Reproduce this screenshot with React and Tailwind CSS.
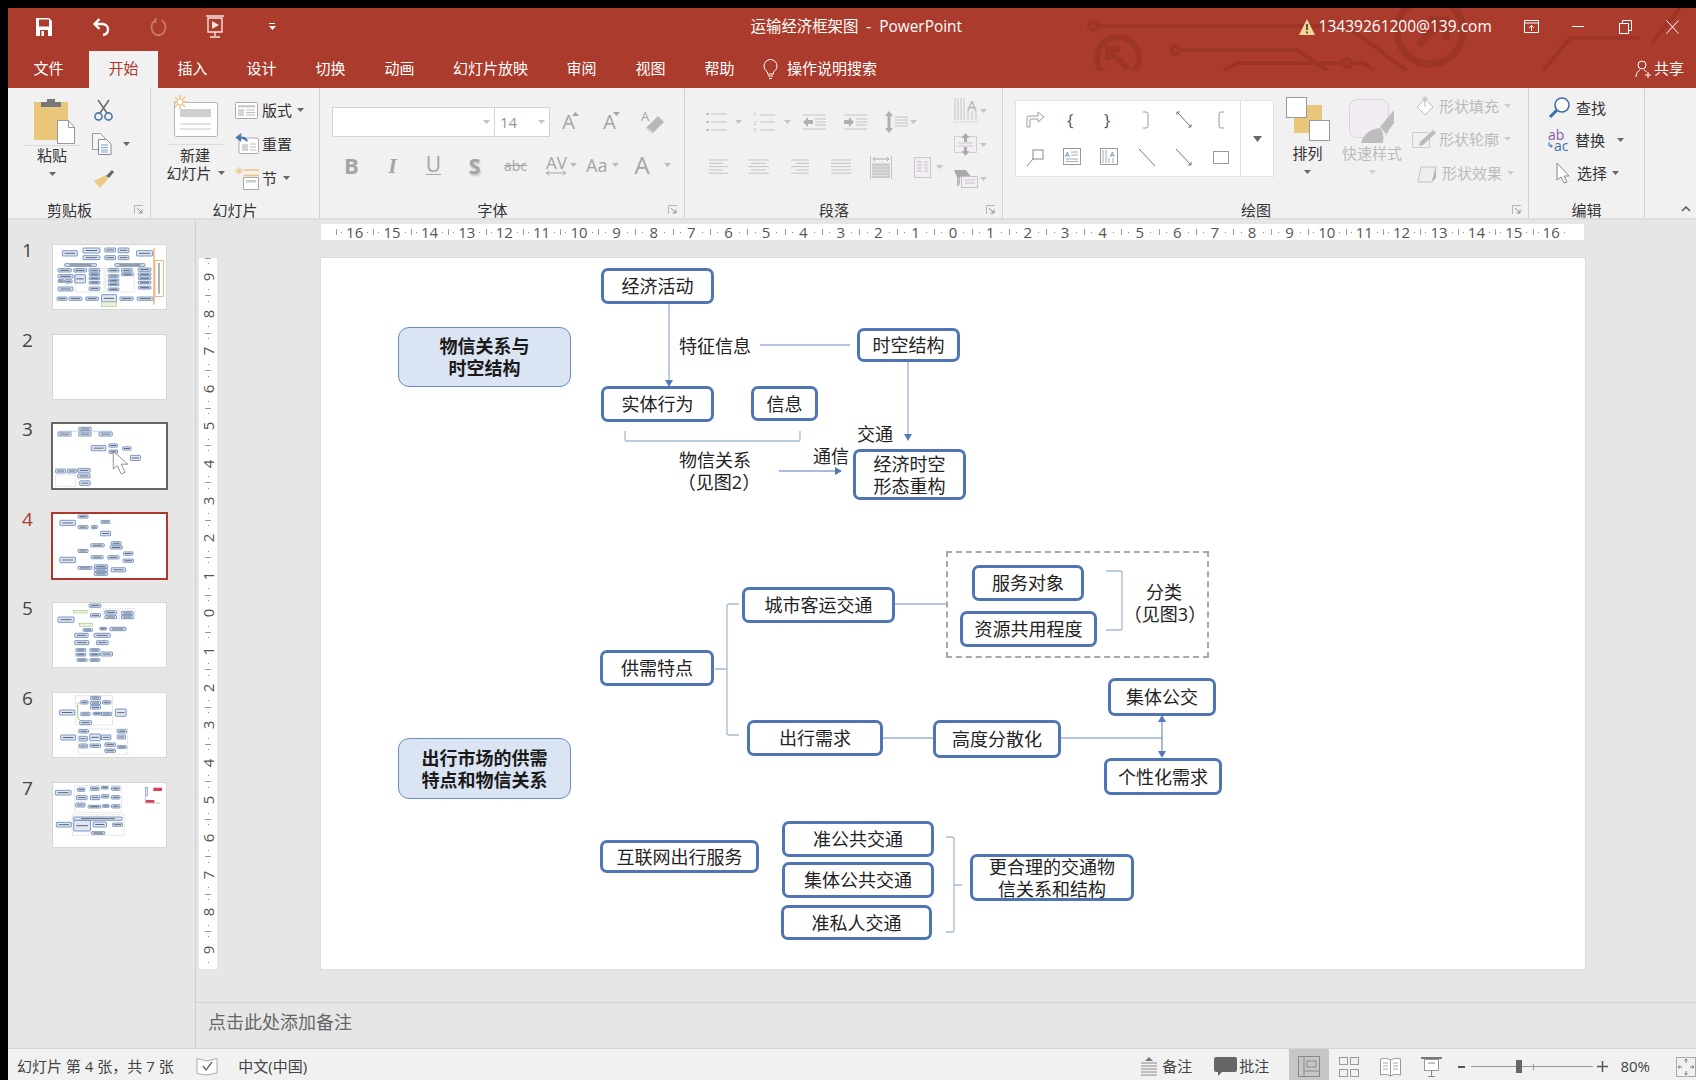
import React from "react";

const FONT = "font-['Open_Sans','Noto_Sans_CJK_SC',sans-serif]";
const LN = "#9fb3d4";
const ARW = "#5579b8";
const D = "#b4b4b4";

const nodes = [
  ["经济活动", 602, 269, 111, 35],
  ["时空结构", 858, 329, 101, 33],
  ["实体行为", 602, 387, 111, 35],
  ["信息", 752, 387, 65, 34],
  ["经济时空\n形态重构", 854, 450, 111, 50],
  ["城市客运交通", 743, 588, 151, 35],
  ["服务对象", 973, 566, 110, 35],
  ["资源共用程度", 961, 612, 135, 35],
  ["供需特点", 601, 651, 112, 35],
  ["出行需求", 748, 721, 134, 35],
  ["高度分散化", 934, 721, 126, 37],
  ["集体公交", 1109, 679, 106, 37],
  ["个性化需求", 1105, 759, 116, 36],
  ["互联网出行服务", 601, 841, 157, 32],
  ["准公共交通", 783, 822, 150, 35],
  ["集体公共交通", 783, 863, 150, 35],
  ["准私人交通", 782, 906, 149, 34],
  ["更合理的交通物\n信关系和结构", 971, 855, 162, 46],
];
const heads = [
  ["物信关系与\n时空结构", 398, 328, 173, 59],
  ["出行市场的供需\n特点和物信关系", 398, 739, 173, 60],
];
const notes = [
  ["特征信息", 715, 347],
  ["物信关系", 715, 461],
  ["（见图2）", 719, 483],
  ["通信", 831, 457],
  ["交通", 875, 435],
  ["分类", 1164, 593],
  ["（见图3）", 1165, 615],
];

function Connectors() {
  const p = (d, c = LN, w = 1.3) => <path d={d} fill="none" stroke={c} strokeWidth={w} />;
  const tri = (d) => <path d={d} fill={ARW} />;
  return (
    <svg className="absolute inset-0" width="1264" height="711" viewBox="321 259 1264 711">
      {p("M669 304V382", "#8398bd", 1)}
      {tri("M665 381h8l-4 7z")}
      {p("M760 346H850")}
      {p("M908 362V436")}
      {tri("M904 435h8l-4 7z")}
      {p("M625 432v8a2 2 0 0 0 2 2H798a2 2 0 0 0 2-2v-8", "#a9b9d3")}
      {p("M779 472H836", ARW, 1)}
      {tri("M835 468l7 4-7 4z")}
      {p("M894 605H946")}
      {p("M1106 572h14a2 2 0 0 1 2 2v55a2 2 0 0 1-2 2h-14", "#a9b9d3")}
      {p("M739 605h-10a2 2 0 0 0-2 2V734a2 2 0 0 0 2 2h10M715 670h12", "#a9b9d3")}
      {p("M882 739H934M1060 739H1162")}
      {p("M1162 722V754", ARW, 1)}
      {tri("M1162 716l-4 7h8z")}
      {tri("M1162 759l-4-7h8z")}
      {p("M946 838h6a2 2 0 0 1 2 2V931a2 2 0 0 1-2 2h-6M954 886h8", "#a9b9d3")}
    </svg>
  );
}

function Diagram() {
  return (
    <div className="relative w-[1264px] h-[711px] bg-white text-[18px] leading-[22px] text-[#222] shrink-0 shadow-[0_0_0_1px_#dcdcdc]">
      <Connectors />
      <div className="absolute left-[625px] top-[293px] w-[263px] h-[107px] border-2 border-dashed border-[#a8a8a8]" />
      {heads.map(([t, x, y, w, h]) => (
        <div key={t} style={{ left: x - 321, top: y - 259, width: w, height: h + 1 }}
          className="absolute flex items-center justify-center text-center whitespace-pre-line font-bold rounded-[11px] bg-[#dae4f3] border-[1.5px] border-[#6a8cc6] text-[#1a1a1a]">
          {t}
        </div>
      ))}
      {nodes.map(([t, x, y, w, h]) => (
        <div key={t} style={{ left: x - 322, top: y - 259, width: w + 2, height: h + 1 }}
          className="absolute flex items-center justify-center text-center whitespace-pre-line bg-white rounded-[7px] border-[3px] border-[#4f75b5]">
          {t}
        </div>
      ))}
      {notes.map(([t, x, y]) => (
        <div key={t} style={{ left: x - 321 - 60, top: y - 259 - 11, width: 120 }}
          className="absolute text-center whitespace-nowrap">
          {t}
        </div>
      ))}
    </div>
  );
}

/* ---------- thumbnails ---------- */
const Mini = ({ b, vb, children }) => (
  <svg className="block" width="100%" height="100%" viewBox={vb} preserveAspectRatio="none">
    {b.map(([x, y, w, h], i) => (
      <g key={i}>
        <rect x={x} y={y} width={w} height={h} rx="2" fill="#dfe7f4" stroke="#4f75b5" strokeWidth="2.2" />
        <line x1={x + w * 0.15} x2={x + w * 0.85} y1={y + h / 2} y2={y + h / 2} stroke="#444" strokeWidth="2.4" />
      </g>
    ))}
    {children}
  </svg>
);
const t1 = [[188,93,45,16],[250,85,50,15],[315,85,32,12],[355,85,32,14],[410,93,48,16],[250,108,50,12],[315,108,32,12],[355,108,32,12],[195,132,95,8],[345,132,90,8],[175,147,40,10],[222,147,38,10],[268,147,32,10],[325,147,32,10],[365,147,32,10],[415,145,38,10],[175,165,45,10],[195,180,22,10],[225,165,32,25],[268,160,32,8],[268,172,32,8],[268,185,32,8],[325,165,32,8],[325,178,32,8],[325,190,32,8],[365,160,35,8],[415,160,38,8],[415,172,38,8],[415,185,38,8],[415,200,38,8],[175,180,18,8],[175,202,45,12],[268,202,32,10],[325,205,32,8],[172,232,30,10],[208,232,38,10],[258,232,38,10],[305,225,45,22],[360,232,40,10],[412,232,48,10]];
const t3 = [[235,622,38,10],[172,637,40,12],[235,637,38,12],[297,637,40,12],[273,678,44,16],[327,673,26,10],[327,692,26,10],[368,682,26,10],[392,708,30,16],[165,750,30,12],[200,750,28,12],[232,748,38,12],[232,765,38,12],[238,786,32,14]];
const t5 = [[268,1158,35,10],[175,1197,48,16],[272,1187,30,10],[315,1178,35,10],[315,1192,35,10],[365,1180,35,10],[365,1192,35,10],[250,1232,28,8],[300,1228,20,8],[330,1228,48,10],[225,1246,40,12],[283,1246,48,12],[225,1268,42,12],[290,1268,35,12],[228,1292,30,8],[270,1292,30,8],[303,1302,35,12],[228,1306,30,8],[270,1306,30,8],[232,1322,30,8],[270,1322,30,8]];
const t6 = [[180,153,45,15],[243,125,22,10],[272,112,30,10],[272,127,30,10],[272,140,30,10],[308,125,25,10],[347,150,32,22],[243,160,28,10],[280,160,25,8],[305,160,30,10],[240,185,35,12],[183,228,45,15],[238,212,28,10],[238,232,25,14],[270,225,32,20],[305,228,28,14],[352,212,28,10],[352,228,25,12],[238,255,25,12],[270,255,32,10],[315,252,32,10],[315,270,32,10],[352,260,28,8]];
const t7 = [[167,392,47,14],[233,385,22,10],[272,382,26,10],[305,380,20,8],[335,382,25,10],[230,408,32,12],[272,408,28,12],[305,405,22,10],[335,408,25,10],[228,430,28,12],[265,437,38,8],[308,435,20,8],[335,435,25,10],[222,472,145,10],[170,488,45,14],[222,482,50,32],[280,487,40,15],[338,490,30,10],[275,516,40,8]];
const dash = (x, y, w, h) => <rect x={x} y={y} width={w} height={h} fill="none" stroke="#999" strokeWidth="1.2" strokeDasharray="4 3" />;

const thumbs = [
  <Mini b={t1} vb="160 76 338 192">
    {dash(228, 145, 85, 72)}{dash(318, 145, 85, 72)}
    <rect x="465" y="122" width="25" height="108" fill="#fff" stroke="#e8904a" strokeWidth="2" />
    <line x1="462" x2="462" y1="85" y2="255" stroke="#e8904a" strokeWidth="3" />
    <line x1="477" x2="477" y1="130" y2="222" stroke="#666" strokeWidth="3" />
    <rect x="305" y="247" width="45" height="14" fill="#e8f2dd" stroke="#8cc063" strokeWidth="1.5" />
  </Mini>,
  null,
  <Mini b={t3} vb="157 612 343 196">
    {dash(165, 768, 60, 35)}
    <line x1="172" x2="337" y1="634" y2="634" stroke="#4f75b5" />
    <path d="M340 695v55l12-10 12 25 12-5-12-25h20z" fill="#fff" stroke="#333" strokeWidth="1.6" />
  </Mini>,
  <Mini b={[...nodes, ...heads].map(([, x, y, w, h]) => [(x - 321) * 0.2674 + 157, (y - 258) * 0.2756 + 880, w * 0.2674, h * 0.2756])} vb="157 880 338 196" />,
  <Mini b={t5} vb="160 1155 338 192">
    <rect x="222" y="1177" width="40" height="8" fill="#eaf3e2" stroke="#8cc063" strokeWidth="1.5" />
    <rect x="240" y="1216" width="38" height="9" fill="#eaf3e2" stroke="#8cc063" strokeWidth="1.5" />
    {dash(310, 1172, 45, 30)}{dash(360, 1172, 45, 30)}
  </Mini>,
  <Mini b={t6} vb="160 102 338 192">
    {dash(228, 110, 110, 88)}{dash(235, 210, 148, 75)}
    <path d="M240 130q-6 0-6 8v36q0 8 6 8" fill="none" stroke="#8cc063" strokeWidth="2.5" />
  </Mini>,
  <Mini b={t7} vb="160 370 338 192">
    {dash(225, 378, 140, 80)}{dash(218, 465, 155, 62)}
    <rect x="460" y="384" width="26" height="10" fill="#d8405a" />
    <rect x="438" y="421" width="25" height="8" fill="#d8405a" />
    <rect x="436" y="383" width="7" height="26" fill="#e4ebf6" stroke="#4f75b5" strokeWidth="1.5" />
    <path d="M436 412v18h44" fill="none" stroke="#444" strokeWidth="1" />
  </Mini>,
];

function Sidebar() {
  return (
    <div className="w-[188px] shrink-0 border-r border-[#cfcfcf] pt-[25px] flex flex-col gap-[25.6px]">
      {thumbs.map((t, i) => (
        <div key={i} className="flex h-[64px] items-start">
          <div className={`w-[45px] pl-[14px] -mt-[5px] text-[19px] leading-[20px] ${i === 3 ? "text-[#ab3a2c]" : "text-[#444]"}`}>{i + 1}</div>
          <div className={`w-[113px] h-[64px] bg-white overflow-hidden ${i === 2 ? "outline-2 outline-[#666]" : i === 3 ? "outline-2 outline-[#ab3a2c]" : "outline-1 outline-[#d6d6d6]"}`}>{t}</div>
        </div>
      ))}
    </div>
  );
}

/* ---------- rulers ---------- */
const cmLabels = [...Array(17).keys()].map((n) => 16 - n).concat([...Array(16).keys()].map((n) => n + 1));
const vLabels = [...Array(10).keys()].map((n) => 9 - n).concat([...Array(9).keys()].map((n) => n + 1));

function HRuler() {
  return (
    <div className="ml-[125px] w-[1263px] h-[16px] bg-white flex pl-[15px] shrink-0 text-[15px] leading-[16px] text-[#555]">
      {cmLabels.map((n, i) => (
        <div key={i} className="w-[37.4px] shrink-0 h-full flex items-center justify-between">
          <i className="w-px h-[6px] bg-[#999]" />
          <i className="w-px h-px bg-[#888]" />
          <span>{n}</span>
          <i className="w-px h-px bg-[#888]" />
          <i className="w-px h-px" />
        </div>
      ))}
    </div>
  );
}
function VRuler() {
  return (
    <div className="ml-[3px] w-[18px] h-[711px] bg-white shrink-0 flex flex-col text-[15px] leading-[16px] text-[#555]">
      {vLabels.map((n, i) => (
        <div key={i} className="h-[37.4px] shrink-0 w-full flex flex-col items-center justify-between">
          <i className="h-px w-[6px] bg-[#999]" />
          <i className="h-px w-px bg-[#888]" />
          <span className="h-[16px] w-[16px] flex items-center justify-center -rotate-90">{n}</span>
          <i className="h-px w-px bg-[#888]" />
          <i className="h-px w-px" />
        </div>
      ))}
    </div>
  );
}

/* ---------- icons ---------- */
const I = ({ w, h, vb, children, cls = "" }) => (
  <svg width={w} height={h} viewBox={vb || `0 0 ${w} ${h}`} className={`block shrink-0 overflow-visible ${cls}`} fill="none">{children}</svg>
);
const Caret = ({ c = "#666", cls = "" }) => (
  <I w={7} h={4} cls={cls}><path d="M0 0h7L3.5 4z" fill={c} /></I>
);
const hl = (x1, x2, ys, c = D, sw = 1) => ys.map((y) => <line key={y + "" + x1} x1={x1} x2={x2} y1={y} y2={y} stroke={c} strokeWidth={sw} />);

const Launcher = () => (
  <I w={10} h={10}>
    <path d="M.5 9V.5H9" stroke="#b5b5b5" />
    <path d="M3 3l5 5M8 4.5V8H4.5" stroke="#8f8f8f" />
  </I>
);

function Circuit() {
  const c = "#9d3527";
  return (
    <svg className="absolute left-[1072px] top-0" width="616" height="63" viewBox="1080 8 616 63" fill="none" stroke={c} strokeWidth="4">
      <circle cx="1093" cy="26" r="4" />
      <path d="M1097 26H1347L1407 71" />
      <circle cx="1175" cy="50" r="4" />
      <path d="M1179 50H1297L1328 71" />
      <path d="M1223 71L1237 63H1343M1351 63H1363L1375 71" />
      <circle cx="1347" cy="63" r="4" />
      <circle cx="1118" cy="58" r="21" strokeWidth="6" />
      <path d="M1109 50L1128 69M1108 60V49H1120" strokeWidth="6" />
      <circle cx="1430" cy="31" r="33" strokeWidth="7" />
      <path d="M1418 45L1445 20M1428 20H1446V40" strokeWidth="7" />
      <path d="M1543 71L1570 38H1640M1652 43L1680 8" />
    </svg>
  );
}

function TitleRow() {
  return (
    <div className="relative h-[43px] flex items-center pb-[6px] pl-[8px] text-white text-[15.4px] shrink-0">
      <div className="w-[58px] flex justify-center">
        <I w={16} h={18}><path d="M0 0h13l3 3v15H0z" fill="#fff" /><rect x="3" y="1.5" width="10" height="7" fill="#ab3b2c" /><rect x="4" y="12" width="8" height="6" fill="#ab3b2c" /><rect x="5.500" y="13" width="2.500" height="5" fill="#fff" /></I>
      </div>
      <div className="w-[58px] flex justify-center">
        <I w={17} h={18}><path d="M6.5 1L1.5 6l5 5M2 6h8a5.5 5.5 0 0 1 5 5.5c0 2.5-1.5 5-5 5.5" stroke="#fff" strokeWidth="2.4" /></I>
      </div>
      <div className="w-[58px] flex justify-center">
        <I w={17} h={20}><path d="M11.5 3a7 8 0 1 1-6 0M5.5 1v5" stroke="#c8796c" strokeWidth="1.8" /></I>
      </div>
      <div className="w-[58px] flex justify-center">
        <I w={20} h={24}>
          <path d="M1 1h18M3 3h14v14H3zM10 17v4M5 22h10" stroke="#f3e3df" strokeWidth="1.4" />
          <path d="M7 6l7 4-7 4z" fill="#f3e3df" />
        </I>
      </div>
      <div className="w-[58px] flex flex-col items-center gap-[2px]">
        <i className="w-[6px] h-px bg-white" />
        <Caret c="#fff" />
      </div>
      <div className="ml-[450px] w-[209px] whitespace-nowrap shrink-0">运输经济框架图&nbsp; -&nbsp; PowerPoint</div>
      <div className="ml-[339px] flex items-center gap-[4px]">
        <I w={16} h={16}>
          <path d="M8 0L16 16H0z" fill="#f3d794" />
          <path d="M8 5v6M8 12.5v2" stroke="#333" strokeWidth="1.6" />
        </I>
        <span className="w-[171px] text-[15.5px] whitespace-nowrap">13439261200@139.com</span>
      </div>
      <div className="ml-[18px] w-[48px] flex justify-center">
        <I w={15} h={13}><path d="M.5.5h14v12H.5zM.5 3h14M7.5 11V6M5 8l2.5-2.5L10 8" stroke="#fff" /></I>
      </div>
      <div className="w-[48px] flex justify-center"><i className="w-[12px] h-[1.5px] bg-white" /></div>
      <div className="w-[48px] flex justify-center">
        <I w={13} h={14}><path d="M.5 3.5h9v10h-9zM3.5 3.5V.5h9v10h-3" stroke="#fff" /></I>
      </div>
      <div className="w-[48px] flex justify-center">
        <I w={13} h={14}><path d="M.5.5l12 13M12.5.5L.5 13.5" stroke="#fff" /></I>
      </div>
    </div>
  );
}

const tabs = [["文件", 75], ["开始", 69, 1], ["插入", 69], ["设计", 69], ["切换", 69], ["动画", 69], ["幻灯片放映", 113], ["审阅", 69], ["视图", 69], ["帮助", 69]];
function TabRow() {
  return (
    <div className="relative h-[37px] flex pl-[6px] text-[15px] text-white shrink-0">
      {tabs.map(([t, w, on]) => (
        <div key={t} style={{ width: w }}
          className={`flex items-center justify-center shrink-0 pb-[2px] ${w === 75 ? "pr-[6px]" : ""} ${on ? "bg-[#f1f1f1] text-[#ab3a2c]" : ""}`}>{t}</div>
      ))}
      <div className="flex items-center ml-[9px] gap-[9px] pb-[2px]">
        <I w={15} h={20}>
          <path d="M4.5 13C2.5 11.5 1 9.5 1 7a6.5 6.5 0 0 1 13 0c0 2.500-1.500 4.500-3.500 6v2h-6zM5 17h5M6 19.500h3" stroke="#fff" />
        </I>
        <span>操作说明搜索</span>
      </div>
      <div className="ml-auto flex items-center pr-[12px] gap-[2px] pb-[2px]">
        <I w={17} h={18}>
          <circle cx="7" cy="5" r="4" stroke="#fff" />
          <path d="M1 17c0-4 2-6 4-7M9 10c1 .5 2 1 2.500 2M13 12v6M10 15h6" stroke="#fff" />
        </I>
        <span>共享</span>
      </div>
    </div>
  );
}

function Group({ w, label, launcher = true, children }) {
  return (
    <div style={{ width: w }} className="h-full shrink-0 flex flex-col border-r border-[#d2d2d2]">
      <div className="h-[112px] flex shrink-0">{children}</div>
      <div className="h-[18px] flex items-center pt-[2px]">
        <span className="flex-1 text-center text-[15px] leading-[18px] text-[#333]">{label}</span>
        {launcher && <div className="w-[19px] flex justify-center pr-[4px]"><Launcher /></div>}
      </div>
    </div>
  );
}

function Clipboard() {
  return (
    <Group w={143} label="剪贴板">
      <div className="ml-[16px] w-[56px] pt-[10px] flex flex-col items-center">
        <I w={41} h={46} cls="ml-[5px]">
          <rect y="4" width="34" height="38" fill="#eac67a" />
          <path d="M7 9V4h6V1h8v3h6v5z" fill="#777" />
          <path d="M23.500 22.500h11l6 7v16h-17z" fill="#fff" stroke="#999" />
          <path d="M34.500 22.500v7h6" stroke="#999" />
        </I>
        <i className="w-full h-px bg-[#dcdcdc] mt-px" />
        <span className="-mt-[2px] text-[15px] leading-[22px] text-[#333]">粘贴</span>
        <Caret cls="mt-[6px]" />
      </div>
      <div className="ml-[12px] pt-[12px] flex flex-col">
        <I w={20} h={21} cls="ml-[2px]">
          <path d="M4 0l9 13M15 0L6 13" stroke="#666" strokeWidth="1.4" />
          <circle cx="4.500" cy="16.500" r="3.600" stroke="#4a78b0" strokeWidth="1.600" />
          <circle cx="14.500" cy="16.500" r="3.600" stroke="#4a78b0" strokeWidth="1.600" />
        </I>
        <div className="mt-[12px] flex items-center">
          <I w={20} h={22}>
            <path d="M.5.5h8l4 4v12H.5z" fill="#f6f6f6" stroke="#999" />
            <path d="M6.500 6.500h8l4.500 4.500v10.500H6.500z" fill="#f8fbff" stroke="#8a8a8a" />
            {hl(9, 16, [12, 14.500, 17, 19], "#7fa4cc")}
          </I>
          <Caret cls="ml-[11px]" />
        </div>
        <I w={20} h={18} cls="ml-[2px] mt-[15px]">
          <path d="M12 5L0 11l6 7 8-9z" fill="#ebc97f" />
          <path d="M12 6l6-6 2 2-5 6z" fill="#666" />
        </I>
      </div>
    </Group>
  );
}

function Slides() {
  const rowCls = "flex items-center text-[15px] text-[#333]";
  return (
    <Group w={169} label="幻灯片" launcher={false}>
      <div className="ml-[16px] w-[58px] pt-[7px] flex flex-col items-center">
        <I w={46} h={42} cls="-ml-[3px]">
          <rect x="2.500" y="7.500" width="43" height="34" rx="2" fill="#fff" stroke="#b5b5b5" />
          <rect x="8" y="14" width="31" height="8" fill="#cfcfcf" />
          {hl(8, 39, [29, 34], "#c8c8c8")}
          <g stroke="#efc27a" strokeWidth="1.400">
            <path d="M8 0v14M1 7h14M3 2l10 10M13 2L3 12" />
          </g>
          <circle cx="8" cy="7" r="3" fill="#fff" stroke="#efc27a" />
        </I>
        <i className="w-full h-px bg-[#dcdcdc] mt-[7px]" />
        <span className="text-[15px] leading-[20px] text-[#333] -ml-[2px]">新建</span>
        <span className="text-[15px] leading-[18px] -mt-[1px] text-[#333] whitespace-nowrap flex items-center gap-[6px] -ml-[1px]">幻灯片<Caret /></span>
      </div>
      <div className="ml-[10px] pt-[12px] flex flex-col">
        <div className={rowCls + " h-[20px]"}>
          <I w={23} h={17} cls="mr-[4px]">
            <rect x=".5" y=".5" width="22" height="16" rx="1" fill="#fff" stroke="#aaa" />
            <rect x="3" y="3" width="17" height="2.500" fill="#ccc" />
            <rect x="3" y="7" width="6" height="7" fill="#d5d5d5" />
            {hl(11, 20, [8, 10.500, 13], "#bbb")}
          </I>
          版式<Caret cls="ml-[5px]" />
        </div>
        <div className={rowCls + " h-[22px] mt-[13px]"}>
          <I w={24} h={20} cls="mr-[3px]">
            <rect x="4" y="4" width="19.500" height="15.500" rx="1" fill="#fff" stroke="#aaa" />
            <rect x="7" y="10" width="6" height="7" fill="#d5d5d5" />
            {hl(15, 21, [10, 13, 16], "#bbb")}
            <path d="M1.500 3.500l4-3v6zM5 3.500h3a4 4 0 0 1 4 4" fill="#4a78b0" stroke="#4a78b0" strokeWidth="1.500" />
          </I>
          重置
        </div>
        <div className={rowCls + " h-[24px] mt-[11px]"}>
          <I w={24} h={24} cls="mr-[3px]">
            {hl(9, 24, [4, 9.500], "#efc27a", 1.500)}
            <path d="M4 1v8M0 5h8M1.500 2.500l5 5M6.500 2.500l-5 5" stroke="#efc27a" />
            <rect x="8.500" y="11.500" width="15" height="12" fill="#fff" stroke="#aaa" />
            <rect x="11" y="14" width="10" height="2.500" fill="#ccc" />
          </I>
          节<Caret cls="ml-[6px]" />
        </div>
      </div>
    </Group>
  );
}

const fCell = "w-[41px] h-[30px] flex items-center justify-center shrink-0 text-[#a5a5a5]";
function FontGroup() {
  return (
    <Group w={365} label="字体">
      <div className="pt-[19px] pl-[12px] flex flex-col font-['Open_Sans',sans-serif]">
        <div className="flex h-[30px]">
          <div className="w-[218px] flex border border-[#d4d4d4] bg-white">
            <div className="w-[162px] border-r border-[#d4d4d4] flex items-center justify-end pr-[4px]"><Caret c="#c4c4c4" /></div>
            <div className="flex-1 flex items-center justify-between pl-[5px] pr-[4px] text-[15px] text-[#a39089]">14<Caret c="#c4c4c4" /></div>
          </div>
          <div className={fCell + " text-[20px]"}>
            A<I w={7} h={4} cls="mb-[16px] -ml-[3px]"><path d="M0 4L3.500 0 7 4z" fill="#a5a5a5" /></I>
          </div>
          <div className={fCell + " text-[20px]"}>
            A<I w={7} h={4} cls="mb-[16px] -ml-[3px]"><path d="M0 0L3.500 4 7 0z" fill="#a5a5a5" /></I>
          </div>
          <div className="w-[41px] flex items-center justify-center">
            <I w={24} h={24}>
              <text x="0" y="11" fontSize="13" fill="#a5a5a5" fontFamily="Open Sans">A</text>
              <path d="M5 18L17 6l6 6-11 11z" fill="#b8b8b8" />
              <path d="M5 18l7 5" stroke="#d8d8d8" strokeWidth="2" />
            </I>
          </div>
        </div>
        <div className="flex h-[30px] mt-[13px] items-center -ml-[1px]">
          <div className={fCell + " text-[22px] font-bold"}>B</div>
          <div className={fCell + " text-[22px] italic font-['Liberation_Serif',serif] font-bold"}>I</div>
          <div className={fCell + " text-[21px]"}><span className="underline underline-offset-2 decoration-1">U</span></div>
          <div className={fCell + " text-[22px] font-bold [text-shadow:1px_2px_2px_#c5c5c5]"}>S</div>
          <div className={fCell + " text-[14px] line-through"}>abc</div>
          <div className="w-[41px] h-[30px] flex items-center shrink-0 text-[#a5a5a5] text-[17px] gap-[3px] leading-[15px] pl-[10px]">
            <span className="flex flex-col items-center">AV
              <I w={20} h={6}><path d="M0 3h20M3 .5L.5 3 3 5.500M17 .5L19.500 3 17 5.500" stroke="#a5a5a5" /></I>
            </span>
            <Caret c="#bbb" />
          </div>
          <div className="w-[41px] ml-[2px] h-[30px] flex items-center shrink-0 text-[#a5a5a5] text-[18px] gap-[5px] pl-[7px]">Aa<Caret c="#bbb" /></div>
          <div className={fCell + " text-[24px] w-[44px]"}>A</div>
          <Caret c="#bbb" />
        </div>
      </div>
    </Group>
  );
}

const Al = ({ w, t = [] }) => (
  <I w={w} h={16}>
    {t.map(([a, b], i) => <line key={i} x1={a} x2={b} y1={1 + i * 3.300} y2={1 + i * 3.300} stroke="#c4c4c4" />)}
  </I>
);
function Para() {
  return (
    <Group w={318} label="段落">
      <div className="w-[260px] pt-[19px] flex flex-col">
        <div className="h-[30px] flex items-center">
          <I w={21} h={20} cls="ml-[21px]">
            {[2, 10, 18].map((y) => <circle key={y} cx="1.500" cy={y} r="1.300" fill="#b8b8b8" />)}
            {hl(5, 21, [2, 10, 18], "#c4c4c4")}
          </I>
          <Caret c="#c4c4c4" cls="ml-[8px]" />
          <I w={22} h={20} cls="ml-[11px]">
            <text x="0" y="5" fontSize="6" fill="#bbb">1</text>
            <text x="0" y="13" fontSize="6" fill="#bbb">2</text>
            <text x="0" y="20" fontSize="6" fill="#bbb">3</text>
            {hl(7, 22, [3, 10, 18], "#c4c4c4")}
          </I>
          <Caret c="#c4c4c4" cls="ml-[9px]" />
          <I w={23} h={16} cls="ml-[12px]">
            {hl(0, 23, [1, 15], "#c4c4c4")}
            {hl(12, 23, [5, 8, 11], "#c4c4c4")}
            <path d="M0 8l5-5v3h5v4H5v3z" fill="#b0b0b0" />
          </I>
          <I w={23} h={16} cls="ml-[18px]">
            {hl(0, 23, [1, 15], "#c4c4c4")}
            {hl(12, 23, [5, 8, 11], "#c4c4c4")}
            <path d="M10 8L5 3v3H0v4h5v3z" fill="#b0b0b0" />
          </I>
          <I w={23} h={22} cls="ml-[18px]">
            <path d="M4 0l4 5H5.500v12H8l-4 5-4-5h2.500V5H0z" fill="#b0b0b0" />
            {hl(10, 23, [6, 9, 12, 15], "#c4c4c4")}
          </I>
          <Caret c="#c4c4c4" cls="ml-[2px]" />
        </div>
        <div className="h-[30px] mt-[15px] pl-[24px] flex items-center">
          <Al w={19} t={[[0, 19], [0, 14], [0, 19], [0, 14], [0, 19]]} />
          <div className="ml-[20px]"><Al w={21} t={[[0, 21], [3, 18], [0, 21], [3, 18], [0, 21]]} /></div>
          <div className="ml-[22px]"><Al w={18} t={[[0, 18], [5, 18], [0, 18], [5, 18], [0, 18]]} /></div>
          <div className="ml-[22px]"><Al w={20} t={[[0, 20], [0, 20], [0, 20], [0, 20], [0, 20]]} /></div>
          <I w={22} h={23} cls="ml-[19px]">
            <path d="M.5 0v23M21.500 0v23" stroke="#c4c4c4" />
            <path d="M3 3h16M5 1L3 3l2 2M17 1l2 2-2 2" stroke="#aaa" />
            <rect x="2" y="7" width="18" height="15" fill="#dcdcdc" />
            {hl(2, 20, [9, 12, 15, 18, 21], "#bdbdbd")}
          </I>
          <I w={17} h={21} cls="ml-[22px]">
            <rect x=".5" y=".5" width="16" height="20" fill="#f3eef3" stroke="#c9c9c9" />
            {hl(3, 8, [5, 8, 11, 14], "#c0c0c0")}
            {hl(10, 14, [5, 8, 11, 14], "#c0c0c0")}
          </I>
          <Caret c="#c4c4c4" cls="ml-[5px]" />
        </div>
      </div>
      <div className="ml-[9px] pt-[10px] flex flex-col">
        <div className="flex items-center gap-[2px]">
          <I w={24} h={25}>
            <path d="M1 0v22M4 0v22M7 0v22M10 0v22M14 13v9M18 13v9M22 13v9" stroke="#c4c4c4" />
            <path d="M0 24h24" stroke="#bbb" strokeDasharray="1 1" />
            <text x="13" y="13" fontSize="15" fill="#b0b0b0" fontFamily="Open Sans">A</text>
          </I>
          <Caret c="#c4c4c4" />
        </div>
        <div className="mt-[10px] flex items-center gap-[3px]">
          <I w={23} h={23}>
            <rect x=".5" y="3.500" width="22" height="16" fill="#f3eef3" stroke="#d0d0d0" />
            {hl(4, 19, [10, 13], "#c9c9c9")}
            <path d="M11.500 0l4 5H13v4h-3V5H7.500zM11.500 23l4-5H13v-4h-3v4H7.500z" fill="#aaa" />
          </I>
          <Caret c="#c4c4c4" />
        </div>
        <div className="mt-[14px] flex items-center gap-[2px]">
          <I w={24} h={18}>
            <path d="M0 0h12l5 7H3z" fill="#aaa" />
            <path d="M3 7v10l3-3V7z" fill="#bbb" />
            <rect x="7.500" y="6.500" width="16" height="11" fill="#f3eef3" stroke="#c4c4c4" />
            {hl(11, 21, [10, 13], "#c4c4c4")}
          </I>
          <Caret c="#c4c4c4" />
        </div>
      </div>
    </Group>
  );
}

const shapes = [
  <path d="M1 16V7a2 2 0 0 1 2-2h9V1l6 5-6 5V8H5a1 1 0 0 0-1 1v7z" stroke="#999" />,
  <text x="4" y="15" fontSize="17" fill="#555" fontFamily="Open Sans">{"{"}</text>,
  <text x="4" y="15" fontSize="17" fill="#555" fontFamily="Open Sans">{"}"}</text>,
  <path d="M5 1h3a2 2 0 0 1 2 2v12a2 2 0 0 1-2 2H5" stroke="#999" />,
  <path d="M2 1l14 15M2 1v3M2 1h3M16 16v-3M16 16h-3" stroke="#666" strokeWidth=".9" />,
  <path d="M12 1H9a2 2 0 0 0-2 2v12a2 2 0 0 0 2 2h3" stroke="#999" />,
  <g stroke="#888"><rect x="7" y="2" width="10" height="9" /><path d="M7 11l-6 7" /></g>,
  <g><rect x=".5" y=".5" width="17" height="16" fill="#fff" stroke="#999" /><text x="2" y="9" fontSize="7" fill="#4a78b0">A</text>{hl(8, 15, [4, 7], "#aaa")}{hl(3, 15, [11, 13.500], "#aaa")}</g>,
  <g><rect x=".5" y=".5" width="17" height="16" fill="#fff" stroke="#999" /><text x="10" y="9" fontSize="7" fill="#4a78b0">A</text><path d="M3 2v13M6 2v13M9 10v5M13 10v5" stroke="#aaa" /></g>,
  <path d="M1 1l16 17" stroke="#666" strokeWidth=".9" />,
  <path d="M1 1l15 16M16 17v-3M16 17h-3" stroke="#666" strokeWidth=".9" />,
  <rect x="1.500" y="3.500" width="15" height="12" stroke="#999" />,
];

function Draw() {
  return (
    <Group w={526} label="绘图">
      <div className="ml-[12px] mt-[12px] w-[259px] h-[77px] bg-white border border-[#e2e2e2] flex">
        <div className="w-[225px] grid grid-cols-6 grid-rows-2 border-r border-[#dcdcdc]">
          {shapes.map((s, i) => <div key={i} className="flex items-center justify-center"><I w={18} h={18}>{s}</I></div>)}
        </div>
        <div className="flex-1 flex items-center justify-center"><I w={9} h={6}><path d="M0 0h9L4.500 6z" fill="#666" /></I></div>
      </div>
      <div className="ml-[12px] w-[43px] mt-[9px] flex flex-col items-center shrink-0">
        <I w={44} h={44}>
          <rect x="8" y="8" width="28" height="28" fill="#eac67a" />
          <rect x=".5" y=".5" width="20" height="20" fill="#fff" stroke="#999" />
          <rect x="23.500" y="23.500" width="20" height="20" fill="#fff" stroke="#999" />
        </I>
        <span className="text-[15px] leading-[22px] mt-[1px] text-[#333] whitespace-nowrap">排列</span>
        <Caret cls="mt-[6px]" />
      </div>
      <div className="ml-[13px] w-[60px] mt-[11px] flex flex-col items-center shrink-0">
        <I w={46} h={44}>
          <rect x=".5" y=".5" width="39" height="38" rx="8" fill="#f2edf2" stroke="#d9d3d9" />
          <path d="M31 28L45 11v13L37 35z" fill="#bdbdbd" />
          <path d="M12 44c3-10 10-14 19-15 3 4 4 8 3 15z" fill="#bdbdbd" />
        </I>
        <span className="text-[15px] leading-[22px] -mt-[1px] text-[#bbb] whitespace-nowrap">快速样式</span>
        <Caret c="#ccc" cls="mt-[6px]" />
      </div>
      <div className="ml-[10px] mt-[8px] flex flex-col text-[15px] leading-[20px] text-[#bbb] shrink-0">
        <div className="h-[20px] flex items-center">
          <I w={24} h={19} cls="mr-[3px]"><path d="M5 10l8-8 8 8-8 8z" fill="#fff" stroke="#bbb" /><path d="M13 10V1" stroke="#bbb" /><circle cx="13" cy="2" r="2" stroke="#bbb" /></I>
          形状填充<Caret c="#ccc" cls="ml-[5px]" />
        </div>
        <div className="h-[20px] mt-[13px] flex items-center">
          <I w={24} h={18} cls="mr-[3px]"><path d="M17 2.500H.5v15h17V9" stroke="#ccc" /><path d="M8 12L21 0l3 3L11 15l-4 1z" fill="#bbb" /></I>
          形状轮廓<Caret c="#ccc" cls="ml-[5px]" />
        </div>
        <div className="h-[20px] mt-[14px] flex items-center">
          <I w={24} h={20} cls="ml-[5px] mr-[1px]"><path d="M4 4h15l-4 15H1z" fill="#eee" stroke="#c4c4c4" /><path d="M19 4v11l-4 4z" fill="#b5b5b5" /></I>
          形状效果<Caret c="#ccc" cls="ml-[5px]" />
        </div>
      </div>
    </Group>
  );
}

function Edit() {
  return (
    <Group w={116} label="编辑" launcher={false}>
      <div className="pl-[19px] pt-[9px] flex flex-col text-[15px] text-[#333]">
        <div className="h-[22px] flex items-center">
          <I w={23} h={22} cls="mr-[5px]"><circle cx="14" cy="8" r="7" fill="#fff" stroke="#3f6ea8" strokeWidth="1.600" /><path d="M9 13l-7 7" stroke="#3f6ea8" strokeWidth="3" /></I>
          查找
        </div>
        <div className="h-[22px] mt-[10px] flex items-center">
          <div className="w-[25px] mr-[2px] text-[14px] leading-[11px] font-['Open_Sans',sans-serif] flex flex-col">
            <span className="text-[#8a5aa8]">ab</span>
            <span className="text-[#3f6ea8] flex items-center">
              <I w={5} h={7} cls="mr-[1px]"><path d="M1 0v4h3M2.500 2.500L4.500 4l-2 1.500" stroke="#3f6ea8" /></I>ac
            </span>
          </div>
          替换<Caret cls="ml-[12px]" />
        </div>
        <div className="h-[22px] mt-[11px] flex items-center">
          <I w={14} h={22} cls="ml-[8px] mr-[7px]"><path d="M1 1v17l4-3 3 6 3-1-3-6h5z" fill="#fff" stroke="#888" /></I>
          选择<Caret cls="ml-[5px]" />
        </div>
      </div>
    </Group>
  );
}

function Ribbon() {
  return (
    <div className="h-[132px] bg-[#f1f1f1] border-b-2 border-[#dedede] flex shrink-0 overflow-hidden">
      <Clipboard /><Slides /><FontGroup /><Para /><Draw /><Edit />
      <div className="flex-1 flex items-end justify-end pb-[6px] pr-[5px]">
        <I w={10} h={6}><path d="M1 5l4-4 4 4" stroke="#555" strokeWidth="1.500" /></I>
      </div>
    </div>
  );
}

function StatusBar() {
  return (
    <div className="h-[32px] bg-[#f1f1f1] border-t border-[#d4d4d4] flex items-center text-[15px] text-[#444] shrink-0">
      <span className="ml-[9px] w-[159px] whitespace-nowrap mt-[4px]">幻灯片 第 4 张，共 7 张</span>
      <I w={22} h={18} cls="ml-[21px] mt-[4px]">
        <path d="M11 3L1 .5v15L11 17l10-2V.5z" fill="#fff" stroke="#aaa" />
        <path d="M7 8l3 4 6-8" stroke="#666" strokeWidth="1.300" />
      </I>
      <span className="ml-[20px] whitespace-nowrap mt-[4px]">中文(中国)</span>
      <I w={16} h={19} cls="ml-[834px] mt-[4px]">
        <path d="M8 0l4 4H4z" fill="#777" />
        {hl(0, 16, [6, 9, 12, 15, 18], "#888")}
      </I>
      <span className="ml-[5px] whitespace-nowrap mt-[4px]">备注</span>
      <I w={23} h={19} cls="ml-[22px] mt-[4px]"><path d="M2 0h19a2 2 0 0 1 2 2v11a2 2 0 0 1-2 2H8l-4 4v-4H2a2 2 0 0 1-2-2V2a2 2 0 0 1 2-2z" fill="#666" /></I>
      <span className="ml-[2px] whitespace-nowrap mt-[4px]">批注</span>
      <div className="ml-[20px] w-[40px] h-[31px] bg-[#c6c6c6] flex items-center justify-center pt-[3px]">
        <I w={22} h={21}><rect x=".5" y=".5" width="21" height="20" stroke="#888" /><path d="M6 .5v20M6 15h16" stroke="#888" /><rect x="9" y="5" width="9" height="6" stroke="#888" /></I>
      </div>
      <I w={20} h={20} cls="ml-[10px] mt-[4px]">
        <g stroke="#999"><rect x=".5" y=".5" width="8" height="7" /><rect x="11.500" y=".5" width="8" height="7" /><rect x=".5" y="12.500" width="8" height="7" /><rect x="11.500" y="12.500" width="8" height="7" /></g>
      </I>
      <I w={21} h={20} cls="ml-[21px] mt-[4px]">
        <path d="M10.500 3C7 1 4 1 .5 2v16c3.500-1 6.500-1 10 1 3.500-2 6.500-2 10-1V2c-3.500-1-6.500-1-10 1zM10.500 3v16" fill="#fff" stroke="#999" />
        {hl(3, 8, [6, 9, 12], "#aaa")}{hl(13, 18, [6, 9, 12], "#aaa")}
      </I>
      <I w={21} h={20} cls="ml-[20px] mt-[4px]">
        <path d="M0 1h21" stroke="#777" strokeWidth="2" />
        <rect x="3.500" y="2.500" width="14" height="11" fill="#fff" stroke="#999" />
        <path d="M7 6h7M10.500 14v5M7 19.500h7" stroke="#888" />
      </I>
      <i className="ml-[16px] w-[7px] h-[2px] bg-[#555] mt-[4px]" />
      <div className="ml-[6px] w-[123px] h-[13px] flex items-center mt-[4px]">
        <i className="w-[45px] h-px bg-[#999]" />
        <i className="w-[6px] h-[13px] bg-[#666]" />
        <i className="w-[11px] h-px bg-[#999]" />
        <i className="w-px h-[6px] bg-[#999]" />
        <i className="flex-1 h-px bg-[#999]" />
      </div>
      <I w={11} h={11} cls="ml-[4px] mt-[4px]"><path d="M0 5.500h11M5.500 0v11" stroke="#555" strokeWidth="1.500" /></I>
      <span className="ml-[12px] font-['Open_Sans',sans-serif] whitespace-nowrap mt-[4px]">80%</span>
      <I w={20} h={20} cls="ml-[26px] mt-[4px]">
        <rect x=".5" y=".5" width="19" height="19" stroke="#aaa" />
        <path d="M10 2v4M8.500 3.500L10 2l1.500 1.500M10 18v-4M8.500 16.500L10 18l1.500-1.500M2 10h4M3.500 8.500L2 10l1.500 1.500M18 10h-4M16.500 8.500L18 10l-1.500 1.500" stroke="#777" />
      </I>
    </div>
  );
}

export default function App() {
  return (
    <div className={`w-[1696px] h-[1080px] bg-black pl-[8px] pt-[8px] overflow-hidden flex flex-col ${FONT}`}>
      <div className="relative h-[80px] bg-[#ab3b2c] shrink-0 overflow-hidden">
        <Circuit />
        <TitleRow />
        <TabRow />
      </div>
      <Ribbon />
      <div className="flex-1 min-h-0 flex bg-[#e6e6e6]">
        <Sidebar />
        <div className="flex-1 min-w-0 flex flex-col">
          <div className="h-[783px] pt-[4px] flex flex-col shrink-0 border-b border-[#d4d4d4]">
            <HRuler />
            <div className="mt-[18px] flex">
              <VRuler />
              <div className="ml-[104px]"><Diagram /></div>
            </div>
          </div>
          <div className="flex-1 pl-[12px] pt-[6px] text-[18px] text-[#666]">点击此处添加备注</div>
        </div>
      </div>
      <StatusBar />
    </div>
  );
}
